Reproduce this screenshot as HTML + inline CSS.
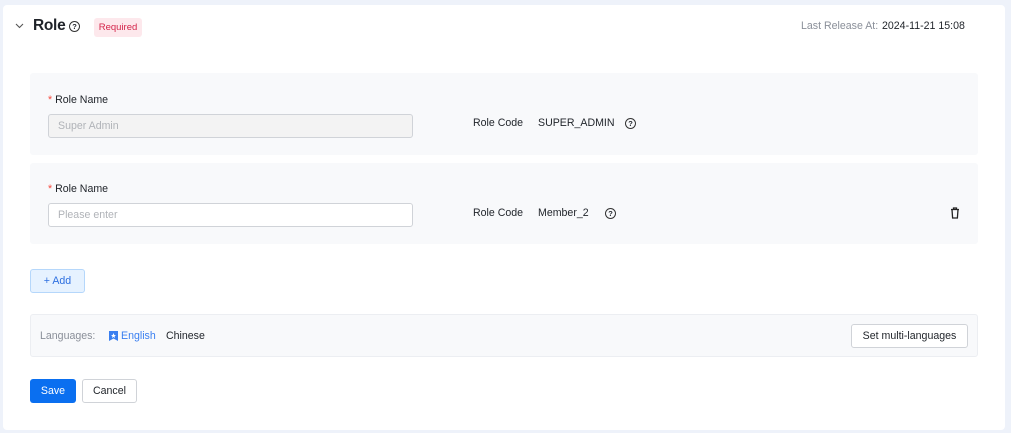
<!DOCTYPE html>
<html><head><style>
*{box-sizing:border-box;margin:0;padding:0}
body{width:1011px;height:433px;background:#eef2fa;font-family:"Liberation Sans",sans-serif;font-size:10.6px;color:#1f2329;position:relative;overflow:hidden}
.card{position:absolute;left:3px;top:5px;width:1002px;height:425px;background:#fff;border-radius:4px}
.a{position:absolute}
.box{position:absolute;left:27px;width:948px;background:#f8f9fb;border-radius:3px}
.inp{position:absolute;left:18px;width:365px;height:24px;border:1px solid #d0d3d8;border-radius:3px;font-size:10.6px;color:#b0b3b8;padding:5px 9px;background:#fff}
.q{position:absolute;display:flex;align-items:center;justify-content:center;width:11px;height:11px;border:1.2px solid #333;border-radius:50%;font-size:7.5px;font-weight:bold;line-height:1}
.star{color:#f5493d}
</style></head><body>
<div class="card">
<svg class="a" style="left:12px;top:18px" width="9" height="6"><path d="M1 1L4.5 4.5L8 1" stroke="#555" fill="none" stroke-width="1.1"/></svg>
<div class="a" style="left:30px;top:12px;font-size:15.5px;font-weight:bold;letter-spacing:-0.3px">Role</div>
<span class="q" style="left:66px;top:16px">?</span>
<div class="a" style="left:91px;top:13px;height:19px;width:48px;background:#fde8ec;color:#d4244a;font-size:9.5px;border-radius:3px;text-align:center;line-height:19px">Required</div>
<div class="a" style="left:798px;top:15px;color:#8a8f99">Last Release At:</div>
<div class="a" style="left:879px;top:15px">2024-11-21 15:08</div>

<div class="box" style="top:68px;height:82px">
<div class="a" style="left:18px;top:21px"><span class="star">*</span> Role Name</div>
<div class="inp" style="top:41px;background:#f3f3f3">Super Admin</div>
<div class="a" style="left:443px;top:44px">Role Code</div>
<div class="a" style="left:508px;top:44px">SUPER_ADMIN</div>
<span class="q" style="left:595px;top:45px">?</span>
</div>
<div class="box" style="top:158px;height:81px">
<div class="a" style="left:18px;top:20px"><span class="star">*</span> Role Name</div>
<div class="inp" style="top:40px">Please enter</div>
<div class="a" style="left:443px;top:44px">Role Code</div>
<div class="a" style="left:508px;top:44px">Member_2</div>
<span class="q" style="left:575px;top:45px">?</span>
<svg class="a" style="left:920px;top:44px" width="10" height="12"><path d="M1 2.5H9M3.5 2.5V1H6.5V2.5M2 2.5L2.6 11H7.4L8 2.5" stroke="#222" fill="none" stroke-width="1.3"/></svg>
</div>

<div class="a" style="left:27px;top:264px;width:55px;height:24px;background:#e6f2ff;border:1px solid #b5d7fb;border-radius:3px;color:#2d6fe0;text-align:center;line-height:22px">+ Add</div>

<div class="box" style="top:309px;height:43px;border:1px solid #eceef2">
<div class="a" style="left:9px;top:15px;color:#8a8f99">Languages:</div>
<svg class="a" style="left:78px;top:16px" width="9" height="10"><path d="M0 0H9V10L4.5 7.5L0 10Z" fill="#3a7ff0"/><path d="M4.5 2L5.3 4H7L5.6 5.1L6 7L4.5 5.9L3 7L3.4 5.1L2 4H3.7Z" fill="#fff"/></svg>
<div class="a" style="left:90px;top:15px;color:#3a7ff0">English</div>
<div class="a" style="left:135px;top:15px">Chinese</div>
<div class="a" style="left:820px;top:9px;width:117px;height:24px;border:1px solid #d0d3d8;border-radius:3px;background:#fff;text-align:center;line-height:22px">Set multi-languages</div>
</div>

<div class="a" style="left:27px;top:374px;width:46px;height:24px;background:#0a6ff0;color:#fff;border-radius:3px;text-align:center;line-height:24px">Save</div>
<div class="a" style="left:79px;top:374px;width:55px;height:24px;border:1px solid #d0d3d8;border-radius:3px;text-align:center;line-height:22px">Cancel</div>
</div>
</body></html>
